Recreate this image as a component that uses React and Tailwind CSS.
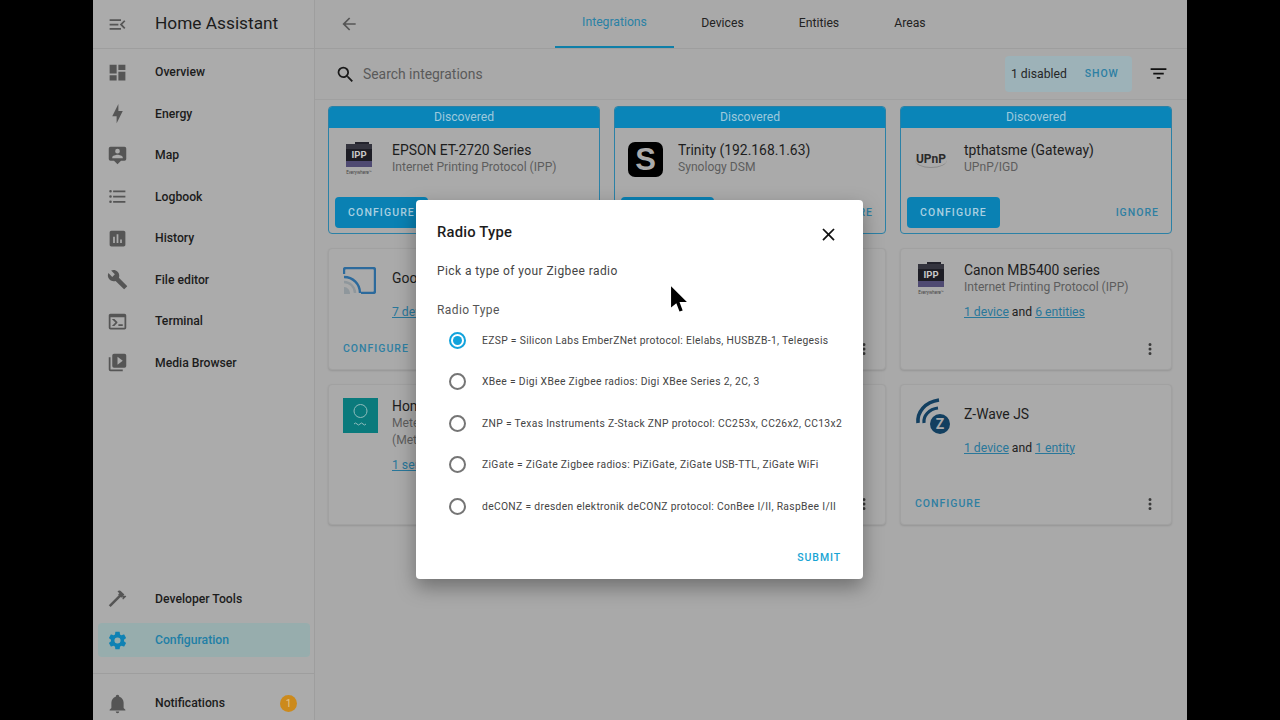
import React from 'react';

const icons = {
  menu: 'M21,15.61L19.59,17L14.58,12L19.59,7L21,8.39L17.44,12L21,15.61M3,6H16V8H3V6M3,13V11H13V13H3M3,18V16H16V18H3Z',
  dashboard: 'M13,3V9H21V3M13,21H21V11H13M3,21H11V15H3M3,13H11V3H3V13Z',
  bolt: 'M11 15H6L13 1V9H18L11 23V15Z',
  map: 'M20 2H4a2 2 0 00-2 2v12a2 2 0 002 2h4l4 4 4-4h4a2 2 0 002-2V4a2 2 0 00-2-2z M12 4.3a2.7 2.7 0 110 5.4 2.7 2.7 0 010-5.4z M18 15H6v-.9c0-2 4-3.1 6-3.1s6 1.1 6 3.1z',
  list: 'M7,5H21V7H7V5M7,13V11H21V13H7M4,4.5A1.5,1.5 0 0,1 5.5,6A1.5,1.5 0 0,1 4,7.5A1.5,1.5 0 0,1 2.5,6A1.5,1.5 0 0,1 4,4.5M4,10.5A1.5,1.5 0 0,1 5.5,12A1.5,1.5 0 0,1 4,13.5A1.5,1.5 0 0,1 2.5,12A1.5,1.5 0 0,1 4,10.5M7,19V17H21V19H7M4,16.5A1.5,1.5 0 0,1 5.5,18A1.5,1.5 0 0,1 4,19.5A1.5,1.5 0 0,1 2.5,18A1.5,1.5 0 0,1 4,16.5Z',
  chart: 'M19,3H5C3.9,3 3,3.9 3,5V19C3,20.1 3.9,21 5,21H19C20.1,21 21,20.1 21,19V5C21,3.9 20.1,3 19,3M9,17H7V10H9V17M13,17H11V7H13V17M17,17H15V13H17V17Z',
  wrench: 'M22.7,19L13.6,9.9C14.5,7.6 14,4.9 12.1,3C10.1,1 7.1,0.6 4.7,1.7L9,6L6,9L1.6,4.7C0.4,7.1 0.9,10.1 2.9,12.1C4.8,14 7.5,14.5 9.8,13.6L18.9,22.7C19.3,23.1 19.9,23.1 20.3,22.7L22.6,20.4C23.1,20 23.1,19.3 22.7,19Z',
  console: 'M20,19V7H4V19H20M20,3A2,2 0 0,1 22,5V19A2,2 0 0,1 20,21H4A2,2 0 0,1 2,19V5C2,3.89 2.9,3 4,3H20M13,17V15H18V17H13M9.58,13L5.57,9H8.4L11.7,12.3C12.09,12.69 12.09,13.33 11.7,13.72L8.42,17H5.59L9.58,13Z',
  media: 'M4,6H2V20A2,2 0 0,0 4,22H18V20H4M20,2H8A2,2 0 0,0 6,4V16A2,2 0 0,0 8,18H20A2,2 0 0,0 22,16V4A2,2 0 0,0 20,2M12,14.5V5.5L18,10L12,14.5Z',
  hammer: 'M2 19.63L13.43 8.2L12.72 7.5L14.14 6.07L12 3.89C13.2 2.7 15.09 2.7 16.27 3.89L19.87 7.5L18.45 8.91H21.29L22 9.62L18.45 13.21L17.74 12.5V9.62L16.27 11.04L15.56 10.33L4.13 21.76L2 19.63Z',
  cog: 'M12,15.5A3.5,3.5 0 0,1 8.5,12A3.5,3.5 0 0,1 12,8.5A3.5,3.5 0 0,1 15.5,12A3.5,3.5 0 0,1 12,15.5M19.43,12.97C19.47,12.65 19.5,12.33 19.5,12C19.5,11.67 19.47,11.34 19.43,11L21.54,9.37C21.73,9.22 21.78,8.95 21.66,8.73L19.66,5.27C19.54,5.05 19.27,4.96 19.05,5.05L16.56,6.05C16.04,5.66 15.5,5.32 14.87,5.07L14.5,2.42C14.46,2.18 14.25,2 14,2H10C9.75,2 9.54,2.18 9.5,2.42L9.13,5.07C8.5,5.32 7.96,5.66 7.44,6.05L4.95,5.05C4.73,4.96 4.46,5.05 4.34,5.27L2.34,8.73C2.21,8.95 2.27,9.22 2.46,9.37L4.57,11C4.53,11.34 4.5,11.67 4.5,12C4.5,12.33 4.53,12.65 4.57,12.97L2.46,14.63C2.27,14.78 2.21,15.05 2.34,15.27L4.34,18.73C4.46,18.95 4.73,19.03 4.95,18.95L7.44,17.94C7.96,18.34 8.5,18.68 9.13,18.93L9.5,21.58C9.54,21.82 9.75,22 10,22H14C14.25,22 14.46,21.82 14.5,21.58L14.87,18.93C15.5,18.67 16.04,18.34 16.56,17.94L19.05,18.95C19.27,19.03 19.54,18.95 19.66,18.73L21.66,15.27C21.78,15.05 21.73,14.78 21.54,14.63L19.43,12.97Z',
  bell: 'M21,19V20H3V19L5,17V11C5,7.9 7.03,5.17 10,4.29C10,4.19 10,4.1 10,4A2,2 0 0,1 12,2A2,2 0 0,1 14,4C14,4.1 14,4.19 14,4.29C16.97,5.17 19,7.9 19,11V17L21,19M14,21A2,2 0 0,1 12,23A2,2 0 0,1 10,21',
  back: 'M20,11V13H8L13.5,18.5L12.08,19.92L4.16,12L12.08,4.08L13.5,5.5L8,11H20Z',
  search: 'M9.5,3A6.5,6.5 0 0,1 16,9.5C16,11.11 15.41,12.59 14.44,13.73L14.71,14H15.5L20.5,19L19,20.5L14,15.5V14.71L13.73,14.44C12.59,15.41 11.11,16 9.5,16A6.5,6.5 0 0,1 3,9.5A6.5,6.5 0 0,1 9.5,3M9.5,5C7,5 5,7 5,9.5C5,12 7,14 9.5,14C12,14 14,12 14,9.5C14,7 12,5 9.5,5Z',
  filter: 'M6,13H18V11H6M3,6V8H21V6M10,18H14V16H10V18Z',
  close: 'M19,6.41L17.59,5L12,10.59L6.41,5L5,6.41L10.59,12L5,17.59L6.41,19L12,13.41L17.59,19L19,17.59L13.41,12L19,6.41Z',
  dots: 'M12,16A2,2 0 0,1 14,18A2,2 0 0,1 12,20A2,2 0 0,1 10,18A2,2 0 0,1 12,16M12,10A2,2 0 0,1 14,12A2,2 0 0,1 12,14A2,2 0 0,1 10,12A2,2 0 0,1 12,10M12,4A2,2 0 0,1 14,6A2,2 0 0,1 12,8A2,2 0 0,1 10,6A2,2 0 0,1 12,4Z',
};

const Icon = ({ d, className }) => (
  <svg viewBox="0 0 24 24" fill="currentColor" fillRule="evenodd" className={className}>
    <path d={d} />
  </svg>
);

const topNav = [
  ['dashboard', 'Overview'],
  ['bolt', 'Energy'],
  ['map', 'Map'],
  ['list', 'Logbook'],
  ['chart', 'History'],
  ['wrench', 'File editor'],
  ['console', 'Terminal'],
  ['media', 'Media Browser'],
];

const radios = [
  'EZSP = Silicon Labs EmberZNet protocol: Elelabs, HUSBZB-1, Telegesis',
  'XBee = Digi XBee Zigbee radios: Digi XBee Series 2, 2C, 3',
  'ZNP = Texas Instruments Z-Stack ZNP protocol: CC253x, CC26x2, CC13x2',
  'ZiGate = ZiGate Zigbee radios: PiZiGate, ZiGate USB-TTL, ZiGate WiFi',
  'deCONZ = dresden elektronik deCONZ protocol: ConBee I/II, RaspBee I/II',
];

const NavItem = ({ icon, label, active }) => (
  <div className={`flex h-[41.5px] items-center ${active ? 'text-[#1f7fa6]' : 'text-[#1c1c1c]'}`}>
    <div className={`flex h-[34px] w-[212px] ml-[5px] items-center rounded ${active ? 'bg-[#97adad]' : ''}`}>
      <Icon d={icons[icon]} className={`ml-[8.5px] h-[21px] w-[21px] ${active ? 'text-[#0f82b4]' : 'text-[#555555]'}`} />
      <span className="ml-[27.5px] text-[12.2px] font-medium">{label}</span>
    </div>
  </div>
);

const IppLogo = () => (
  <div className="flex h-[35px] w-[32px] flex-col items-center">
    <div className="ml-[6px] h-[2px] w-[14px] bg-[#23232c]" />
    <div className="h-[5px] w-[26px] bg-[#34343e]" />
    <div className="flex h-[12px] w-[26px] items-center justify-center bg-[#1d1d25] text-[9.5px] font-bold leading-none text-[#c9c9c9]">IPP</div>
    <div className="h-[6px] w-[26px] bg-[#4f4a72]" />
    <div className="mt-[3px] whitespace-nowrap text-[4.5px] leading-[5px] text-[#444444]">Everywhere™</div>
  </div>
);

const SynologyLogo = () => (
  <div className="ml-[-1px] flex h-[35px] w-[35px] items-center justify-center rounded-[7px] bg-black font-['Liberation_Sans',sans-serif] text-[31px] font-bold leading-none text-[#aaaaaa]">S</div>
);

const UpnpLogo = () => (
  <div className="flex h-[35px] w-[32px] items-center justify-center">
    <span className="rounded-[50%] border-b border-[#8a8a8a] px-[1px] text-[12px] font-bold leading-[15px] text-[#2a2a2a]">UPnP</span>
  </div>
);

const CastLogo = () => (
  <svg viewBox="0 0 33 27" className="mt-[5px] h-[27px] w-[33px]">
    <path d="M1 7V3a2 2 0 0 1 2-2h27a2 2 0 0 1 2 2v21a2 2 0 0 1-2 2H18" fill="none" stroke="#2c6a9c" strokeWidth="2.4" />
    <path d="M1 10c9 0 16 7 16 16" fill="none" stroke="#2c6a9c" strokeWidth="2.4" />
    <path d="M1 15c6 0 11 5 11 11" fill="none" stroke="#8f979c" strokeWidth="2.4" />
    <path d="M1 20c3.500 0 6 3 6 7H1z" fill="#8f979c" />
  </svg>
);

const MetLogo = () => (
  <svg viewBox="0 0 35 35" className="h-[35px] w-[35px]">
    <rect width="35" height="35" fill="#0a7a7c" />
    <circle cx="17.500" cy="13" r="6.500" fill="none" stroke="#8fbcbc" strokeWidth="1" />
    <path d="M11 26q1.500-2 3 0t3 0 3 0 3 0" fill="none" stroke="#8fbcbc" strokeWidth="1" />
  </svg>
);

const ZwaveLogo = () => (
  <svg viewBox="0 0 36 36" className="h-[36px] w-[36px]">
    <path d="M3 25C2 14 10 4 24 2" fill="none" stroke="#123f60" strokeWidth="3.600" />
    <path d="M9 25C8 18 14 11 23 10" fill="none" stroke="#123f60" strokeWidth="3.200" />
    <circle cx="25" cy="26" r="10" fill="#123f60" />
    <text x="25" y="31" textAnchor="middle" fontSize="14" fontWeight="700" fill="#aaaaaa" fontFamily="Roboto, sans-serif">Z</text>
  </svg>
);

const Links = ({ a, b }) => (
  <p className="mt-[8px] whitespace-nowrap text-[12.2px] leading-[16px] text-[#222222]">
    <span className="text-[#29779a] underline">{a}</span> and <span className="text-[#29779a] underline">{b}</span>
  </p>
);

const Dots = () => <Icon d={icons.dots} className="h-[18px] w-[18px] text-[#3a3a3a]" />;

// carte "Discovered" avec l'en-tête bleu
const DiscoveredCard = ({ logo, title, sub }) => (
  <div className="flex flex-col overflow-hidden rounded border border-[#2b81a6] bg-[#aaaaaa]">
    <div className="flex h-[21px] shrink-0 items-center justify-center bg-[#0a85b8] text-[12.2px] text-[#9dc9dc]">Discovered</div>
    <div className="flex flex-1 items-start pl-[14px] pt-[14px]">
      <div className="flex w-[49px] justify-start">{logo}</div>
      <div>
        <h3 className="text-[13.9px] leading-[17px] text-[#1d1d1d]">{title}</h3>
        <p className="text-[12.1px] leading-[17px] text-[#5d5d5d]">{sub}</p>
      </div>
    </div>
    <div className="flex h-[36px] shrink-0 items-start justify-between pl-[6px] pr-[12px]">
      <button className="h-[31px] w-[93px] rounded bg-[#0a81b3] text-[10.5px] font-medium tracking-[1.1px] text-[#a9d0e1]">CONFIGURE</button>
      <span className="mt-[8px] text-[10.5px] font-medium tracking-[1px] text-[#2f7fa2]">IGNORE</span>
    </div>
  </div>
);

const Card = ({ logo, title, sub, links, configure }) => (
  <div className="flex flex-col rounded border border-[#a1a1a1] bg-[#aaaaaa] shadow-[0_1px_2px_rgba(0,0,0,0.12)]">
    <div className="flex flex-1 items-start pl-[14px] pt-[12.5px]">
      <div className="flex w-[49px] justify-start">{logo}</div>
      <div className="min-w-0 flex-1 pr-[12px]">
        <div className="flex min-h-[34px] flex-col justify-center">
          <h3 className="text-[13.9px] leading-[17px] text-[#1d1d1d]">{title}</h3>
          {sub && <p className="text-[12.1px] leading-[17px] text-[#5d5d5d]">{sub}</p>}
        </div>
        <Links a={links[0]} b={links[1]} />
      </div>
    </div>
    <div className="flex h-[40px] shrink-0 items-center justify-between pl-[14px] pr-[12px]">
      <span className="text-[10.5px] font-medium tracking-[1px] text-[#2f7fa2]">{configure ? 'CONFIGURE' : ''}</span>
      <Dots />
    </div>
  </div>
);

const Sidebar = () => (
  <aside className="flex w-[222px] shrink-0 flex-col border-r border-[#9e9e9e] bg-[#ababab]">
    <div className="flex h-[49px] shrink-0 items-center border-b border-[#9e9e9e] text-[#1c1c1c]">
      <Icon d={icons.menu} className="ml-[13.5px] h-[21px] w-[21px] text-[#555555]" />
      <span className="ml-[27.5px] text-[17.3px]">Home Assistant</span>
    </div>
    <nav className="mt-[2.5px]">
      {topNav.map(([icon, label]) => <NavItem key={label} icon={icon} label={label} />)}
    </nav>
    <div className="flex-1" />
    <NavItem icon="hammer" label="Developer Tools" />
    <NavItem icon="cog" label="Configuration" active />
    <div className="mt-[12px] flex h-[47px] items-center border-t border-[#9e9e9e] pt-[13px]">
      <Icon d={icons.bell} className="ml-[13.5px] h-[21px] w-[21px] text-[#555555]" />
      <span className="ml-[27.5px] text-[12.2px] font-medium text-[#1c1c1c]">Notifications</span>
      <span className="ml-auto mr-[17px] flex h-[17px] w-[17px] items-center justify-center rounded-full bg-[#cc8a1c] text-[10px] text-[#e5c68f]">1</span>
    </div>
  </aside>
);

const Dialog = () => (
  <div className="absolute left-[416px] top-[200px] flex h-[379px] w-[447px] flex-col rounded bg-white font-['Roboto',sans-serif] shadow-[0_8px_20px_rgba(0,0,0,0.35)]">
    <div className="flex items-start justify-between pl-[21px] pr-[24px] pt-[22px]">
      <h2 className="text-[14.8px] font-medium leading-[20px] tracking-[0.2px] text-[#1c1c1c]">Radio Type</h2>
      <Icon d={icons.close} className="mt-[2px] h-[21px] w-[21px] text-[#111111]" />
    </div>
    <p className="mt-[16px] pl-[21px] text-[12px] leading-[20px] tracking-[0.42px] text-[#444444]">Pick a type of your Zigbee radio</p>
    <p className="mt-[19px] pl-[21px] text-[12px] leading-[20px] tracking-[0.4px] text-[#555555]">Radio Type</p>
    <div className="mt-[-0.5px]">
      {radios.map((label, i) => (
        <div key={label} className="flex h-[41.5px] items-center pl-[33px]">
          <span className={`flex h-[17px] w-[17px] shrink-0 items-center justify-center rounded-full border-2 ${i === 0 ? 'border-[#12a3dc]' : 'border-[#757575]'}`}>
            {i === 0 && <span className="h-[9px] w-[9px] rounded-full bg-[#12a3dc]" />}
          </span>
          <span className="ml-[16px] whitespace-nowrap text-[10.3px] tracking-[0.33px] text-[#444444]">{label}</span>
        </div>
      ))}
    </div>
    <div className="flex flex-1 items-center justify-end pr-[22px] pt-[10px]">
      <span className="text-[10.5px] font-medium tracking-[0.9px] text-[#18a4d4]">SUBMIT</span>
    </div>
  </div>
);

export default function App() {
  return (
    <div className="relative h-[720px] w-[1280px] overflow-hidden bg-black px-[93px] font-['Roboto',sans-serif]">
      <div className="flex h-full bg-[#a9a9a9]">
        <Sidebar />
        <main className="flex min-w-0 flex-1 flex-col">
          <div className="flex h-[49px] shrink-0 items-center border-b border-[#9e9e9e]">
            <Icon d={icons.back} className="ml-[24px] h-[20px] w-[20px] text-[#555555]" />
            <div className="ml-[196px] flex h-full">
              <div className="flex h-full w-[119px] items-center justify-center border-b-2 border-[#0f7fa8] pb-[1px] text-[12.2px] text-[#2a81a5]">Integrations</div>
              <div className="flex w-[97px] items-center justify-center pb-[1px] text-[12.2px] text-[#222222]">Devices</div>
              <div className="flex w-[96px] items-center justify-center pb-[1px] text-[12.2px] text-[#222222]">Entities</div>
              <div className="flex w-[86px] items-center justify-center pb-[1px] text-[12.2px] text-[#222222]">Areas</div>
            </div>
          </div>
          <div className="flex h-[51px] shrink-0 items-center border-b border-[#a0a0a0]">
            <Icon d={icons.search} className="ml-[20px] h-[21px] w-[21px] text-[#1a1a1a]" />
            <span className="ml-[7px] text-[13.9px] text-[#5a5a5a]">Search integrations</span>
            <div className="ml-auto flex h-[36px] w-[127px] items-center rounded bg-[#9db2b8] pl-[6px]">
              <span className="text-[12.2px] text-[#262626]">1 disabled</span>
              <span className="ml-[18px] text-[10.5px] font-medium tracking-[0.9px] text-[#2c7fa3]">SHOW</span>
            </div>
            <Icon d={icons.filter} className="mb-[2px] ml-[16px] mr-[18px] h-[21px] w-[21px] text-[#111111]" />
          </div>
          <div className="grid grid-cols-[272px_272px_272px] grid-rows-[128px_122px_141px] gap-[14px] pl-[13px] pt-[6px]">
            <DiscoveredCard logo={<IppLogo />} title="EPSON ET-2720 Series" sub="Internet Printing Protocol (IPP)" />
            <DiscoveredCard logo={<SynologyLogo />} title="Trinity (192.168.1.63)" sub="Synology DSM" />
            <DiscoveredCard logo={<UpnpLogo />} title="tpthatsme (Gateway)" sub="UPnP/IGD" />
            <Card logo={<CastLogo />} title="Google Cast" links={['7 devices', '7 entities']} configure />
            <Card logo={null} title="" links={['', '']} />
            <Card logo={<IppLogo />} title="Canon MB5400 series" sub="Internet Printing Protocol (IPP)" links={['1 device', '6 entities']} />
            <Card logo={<MetLogo />} title="Home" sub={<>Meteorologisk institutt<br />(Met.no)</>} links={['1 service', '1 entity']} />
            <Card logo={null} title="" links={['', '']} />
            <Card logo={<ZwaveLogo />} title="Z-Wave JS" links={['1 device', '1 entity']} configure />
          </div>
        </main>
      </div>
      <Dialog />
      <svg viewBox="0 0 18 28" className="absolute left-[670px] top-[285px] h-[30px] w-[19px]">
        <path d="M1 1V21L6 17L9 25L12 24L9 16H16Z" fill="#000000" />
      </svg>
    </div>
  );
}
